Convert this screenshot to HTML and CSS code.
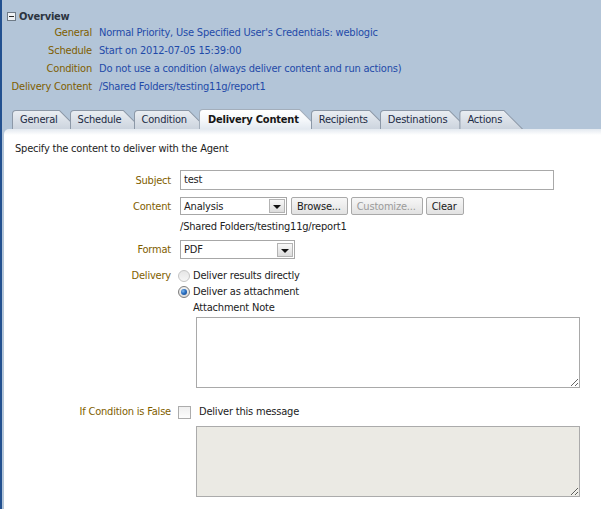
FILE: index.html
```html
<!DOCTYPE html>
<html lang="en">
<head>
<meta charset="utf-8">
<title>Agent - Delivery Content</title>
<link rel="stylesheet" href="styles.css">
</head>
<body>
<div class="page">
  <section class="overview">
    <div class="ov-head"><span class="toggle" aria-hidden="true"></span><span class="ov-title">Overview</span></div>
    <dl class="ov-grid">
      <dt>General</dt><dd>Normal Priority, Use Specified User's Credentials: weblogic</dd>
      <dt>Schedule</dt><dd>Start on 2012-07-05 15:39:00</dd>
      <dt>Condition</dt><dd>Do not use a condition (always deliver content and run actions)</dd>
      <dt>Delivery Content</dt><dd>/Shared Folders/testing11g/report1</dd>
    </dl>
  </section>

  <ul class="tabs">
    <li class="tab"><span class="tab-face">General</span></li>
    <li class="tab"><span class="tab-face">Schedule</span></li>
    <li class="tab"><span class="tab-face">Condition</span></li>
    <li class="tab active"><span class="tab-face">Delivery Content</span></li>
    <li class="tab"><span class="tab-face">Recipients</span></li>
    <li class="tab"><span class="tab-face">Destinations</span></li>
    <li class="tab"><span class="tab-face">Actions</span></li>
  </ul>

  <main class="panel">
    <p class="intro">Specify the content to deliver with the Agent</p>
    <div class="form">
      <div class="row row-subject">
        <span class="lbl">Subject</span>
        <div class="input">test</div>
      </div>
      <div class="row row-content">
        <span class="lbl">Content</span>
        <div class="ctrls">
          <div class="select sel-content"><span class="sel-val">Analysis</span><span class="drop"></span></div>
          <span class="btn btn-first">Browse...</span>
          <span class="btn disabled">Customize...</span>
          <span class="btn">Clear</span>
        </div>
      </div>
      <div class="row row-path">
        <span></span>
        <span class="path">/Shared Folders/testing11g/report1</span>
      </div>
      <div class="row row-format">
        <span class="lbl">Format</span>
        <div class="select sel-format"><span class="sel-val">PDF</span><span class="drop"></span></div>
      </div>
      <div class="row row-delivery">
        <span class="lbl">Delivery</span>
        <div class="delivery">
          <div class="choice"><span class="radio"></span>Deliver results directly</div>
          <div class="choice"><span class="radio checked"></span>Deliver as attachment</div>
          <div class="note-label">Attachment Note</div>
          <textarea class="note"></textarea>
        </div>
      </div>
      <div class="row row-cond">
        <span class="lbl">If Condition is False</span>
        <div class="choice choice-check"><span class="checkbox"></span>Deliver this message</div>
      </div>
      <div class="row row-msg">
        <span></span>
        <textarea class="note note-disabled" readonly></textarea>
      </div>
    </div>
  </main>
</div>
</body>
</html>
```

FILE: styles.css
```css
html, body {
  margin: 0;
  padding: 0;
  height: 100%;
}

body {
  font-family: "DejaVu Sans Condensed", "DejaVu Sans", sans-serif;
  font-size: 11px;
  letter-spacing: -0.2px;
  color: #222;
  overflow: hidden;
}

.page {
  box-sizing: border-box;
  min-height: 100vh;
  border-left: 2px solid #22508f;
  background: #b3c5d8;
  display: flex;
  flex-direction: column;
}

/* ---------- Overview ---------- */
.overview {
  padding: 9px 0 0 5px;
}

.ov-head {
  display: flex;
  align-items: center;
  height: 14px;
}

.toggle {
  box-sizing: border-box;
  width: 9px;
  height: 9px;
  border: 1px solid #6e7a86;
  background: #eef1f4;
  display: flex;
  align-items: center;
  justify-content: center;
  margin-right: 3px;
}

.toggle::before {
  content: "";
  width: 5px;
  height: 1px;
  background: #2a2a2a;
}

.ov-title {
  font-weight: bold;
  color: #2c3440;
}

.ov-grid {
  margin: 0;
  display: grid;
  grid-template-columns: 85px auto;
  column-gap: 7px;
  grid-auto-rows: 18px;
  align-items: center;
}

.ov-grid dt {
  text-align: right;
  color: #7f5e00;
  white-space: nowrap;
}

.ov-grid dd {
  margin: 0;
  color: #1f4aa8;
  white-space: nowrap;
}

/* ---------- Tabs ---------- */
.tabs {
  list-style: none;
  margin: 14px 0 0;
  padding: 0 0 0 10px;
  display: flex;
  align-items: flex-end;
  height: 20px;
}

.tab {
  position: relative;
  box-sizing: border-box;
  height: 19px;
  padding: 1px 0 0 1px;
  margin-right: -9px;
  background: #8c98a7;
  border-top-left-radius: 4px;
  clip-path: polygon(0 0, calc(100% - 19px) 0, 100% 19px, 100% 100%, 0 100%);
}

.tab-face {
  display: block;
  height: 18px;
  line-height: 18px;
  padding: 0 21px 0 7px;
  color: #1c2a44;
  white-space: nowrap;
  background: linear-gradient(#e9edf2, #ccd4de);
  border-top-left-radius: 3px;
  clip-path: polygon(0 0, calc(100% - 19.4px) 0, 100% 19.4px, 100% 100%, 0 100%);
}

.tab.active {
  height: 20px;
  background: #a3aebb;
  clip-path: polygon(0 0, calc(100% - 20px) 0, 100% 20px, 100% 100%, 0 100%);
}

.tab.active .tab-face {
  height: 19px;
  line-height: 20px;
  padding-left: 8px;
  font-weight: bold;
  color: #161616;
  background: linear-gradient(#ffffff 0%, #f4f7fa 55%, #e3e9f0 100%);
  clip-path: polygon(0 0, calc(100% - 20.4px) 0, 100% 20.4px, 100% 100%, 0 100%);
}

/* ---------- Panel ---------- */
.panel {
  flex: 1;
  margin-left: 2px;
  padding: 12px 0 0 11px;
  background: linear-gradient(#e3e9f0 0, #ffffff 6px);
  border-top-left-radius: 5px;
}

.intro {
  margin: 0;
  line-height: 16px;
}

.row {
  display: grid;
  grid-template-columns: 156px auto;
  column-gap: 9px;
  align-items: center;
  justify-content: start;
}

.lbl {
  text-align: right;
  color: #7f5e00;
  white-space: nowrap;
}

.row-subject { margin-top: 13px; }
.row-content { margin-top: 7px; }
.row-path { margin-top: 4px; line-height: 16px; }
.row-format { margin-top: 5px; }
.row-delivery { margin-top: 9px; align-items: start; line-height: 16px; }
.row-cond { margin-top: 16px; line-height: 16px; }
.row-msg { margin-top: 6px; }

.input {
  box-sizing: border-box;
  width: 374px;
  height: 20px;
  line-height: 18px;
  border: 1px solid #a9a9a9;
  padding-left: 3px;
  background: #fff;
}

.ctrls {
  display: flex;
  align-items: center;
}

.select {
  box-sizing: border-box;
  display: flex;
  align-items: center;
  height: 18px;
  border: 1px solid #a7a7a7;
  background: #fff;
  padding-left: 3px;
}

.sel-content { width: 107px; }
.sel-format { width: 115px; height: 19px; }

.sel-val { flex: 1; }

.drop {
  box-sizing: border-box;
  width: 16px;
  height: 14px;
  margin-right: 1px;
  border: 1px solid #b3b3b3;
  background: linear-gradient(#f8f8f8, #dcdcdc);
  display: flex;
  align-items: flex-end;
  justify-content: center;
  padding-bottom: 3px;
}

.drop::after {
  content: "";
  width: 0;
  height: 0;
  border-left: 4px solid transparent;
  border-right: 4px solid transparent;
  border-top: 4px solid #111;
}

.btn {
  box-sizing: border-box;
  height: 18px;
  display: flex;
  align-items: center;
  padding: 0 6px 0 5px;
  margin-left: 3px;
  border: 1px solid #a9a9a9;
  border-radius: 2px;
  background: linear-gradient(#f7f7f7, #e2e2e2);
  color: #1a1a1a;
  white-space: nowrap;
}

.btn-first { margin-left: 4px; }

.btn.disabled { color: #9b9b9b; }

.path { color: #222; white-space: nowrap; }

.delivery {
  display: flex;
  flex-direction: column;
}

.choice {
  display: flex;
  align-items: center;
  height: 16px;
  margin-left: -2px;
  white-space: nowrap;
}

.radio {
  box-sizing: border-box;
  width: 12px;
  height: 12px;
  border-radius: 50%;
  border: 1px solid #c4c4c4;
  background: linear-gradient(#e6e6e6, #f6f6f6);
  margin-right: 3px;
  display: flex;
  align-items: center;
  justify-content: center;
}

.radio.checked {
  border-color: #7d7d7d;
  background: linear-gradient(#f2f2f2, #dadada);
}

.radio.checked::after {
  content: "";
  width: 6px;
  height: 6px;
  border-radius: 50%;
  background: radial-gradient(circle at 35% 35%, #7db6ee 0, #2a6fc0 45%, #0f3f86 100%);
}

.note-label {
  margin-left: 13px;
}

.note {
  display: block;
  box-sizing: border-box;
  width: 384px;
  height: 71px;
  margin: 1px 0 0 16px;
  padding: 2px;
  border: 1px solid #a9a9a9;
  background: #fff;
  resize: both;
  font: inherit;
}

.row-msg .note { margin-top: 0; }

.note-disabled {
  background: #ebeae4;
  border-color: #ababab;
}

.choice-check { gap: 0; }

.checkbox {
  box-sizing: border-box;
  width: 13px;
  height: 13px;
  border: 1px solid #acacac;
  background: linear-gradient(#efefef, #fdfdfd);
  margin-right: 8px;
}
```
